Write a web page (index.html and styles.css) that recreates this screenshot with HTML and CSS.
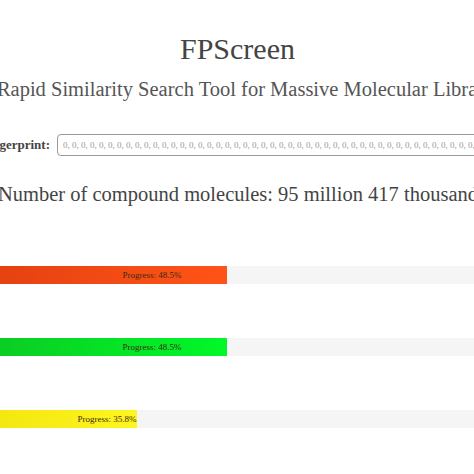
FILE: index.html
```html
<!DOCTYPE html>
<html>
<head>
<meta charset="utf-8">
<link rel="stylesheet" href="styles.css">
</head>
<body>
<div class="page">
  <h1 class="title">FPScreen</h1>
  <p class="subtitle">A Rapid Similarity Search Tool for Massive Molecular Libraries</p>
  <div class="fp-row">
    <label class="fp-label">Fingerprint:</label>
    <div class="fp-input">0, 0, 0, 0, 0, 0, 0, 0, 0, 0, 0, 0, 0, 0, 0, 0, 0, 0, 0, 0, 0, 0, 0, 0, 0, 0, 0, 0, 0, 0, 0, 0, 0, 0, 0, 0, 0, 0, 0, 0, 0, 0, 0, 0, 0, 0, 0, 0, 0, 0, 0, 0, 0, 0, 0, 0, 0, 0, 0, 0, 0, 0, 0, 0, 0, 0, 0, 0, 0, 0, 0, 0, 0, 0, 0, 0, 0, 0, 0, 0</div>
  </div>
  <p class="count">Number of compound molecules: 95 million 417 thousand</p>
  <div class="bars">
    <div class="track"><div class="fill red" style="width:48.5%"><span class="label">Progress: 48.5%</span></div></div>
    <div class="track"><div class="fill green" style="width:48.5%"><span class="label">Progress: 48.5%</span></div></div>
    <div class="track"><div class="fill yellow" style="width:35.8%"><span class="label">Progress: 35.8%</span></div></div>
  </div>
</div>
</body>
</html>
```
FILE: styles.css
```css
html, body {
  margin: 0;
  padding: 0;
  background: #ffffff;
  overflow: hidden;
  height: 474px;
}
.page {
  width: 709px;
  margin-left: -117px;
  font-family: "Liberation Serif", "Times New Roman", serif;
  color: #444;
  padding-top: 33px;
}
.title {
  margin: 0;
  text-align: center;
  font-size: 30px;
  font-weight: normal;
  line-height: 32px;
  color: #444;
}
.subtitle {
  margin: 12px 0 0 0;
  padding-left: 10px;
  text-align: center;
  font-size: 20.5px;
  line-height: 24px;
  color: #555;
}
.fp-row {
  display: flex;
  align-items: center;
  margin-top: 33px;
  gap: 7px;
}
.fp-label {
  font-weight: bold;
  font-size: 13px;
  color: #444;
  flex: none;
  width: 167px;
  text-align: right;
}
.fp-input {
  flex: none;
  width: 700px;
  height: 20px;
  border: 1px solid #999;
  border-radius: 4px;
  font-size: 9px;
  line-height: 20px;
  padding-left: 5px;
  color: #999;
  white-space: nowrap;
  overflow: hidden;
}
.count {
  margin: 26px 0 0 115px;
  font-size: 20.5px;
  line-height: 24px;
  color: #444;
}
.bars {
  margin-top: 60px;
  display: flex;
  flex-direction: column;
  gap: 54px;
}
.track {
  height: 18px;
  background: #f5f5f5;
}
.fill {
  height: 100%;
  box-sizing: border-box;
  padding-left: 194px;
  display: flex;
  align-items: center;
  justify-content: center;
}
.label {
  font-size: 9px;
  color: #3a2a10;
  white-space: nowrap;
}
.red { background: linear-gradient(to right, #d8380e, #ff5418); }
.green { background: linear-gradient(to right, #10b820, #00f828); }
.yellow { background: linear-gradient(to right, #e8dc00, #fff520); }
```
